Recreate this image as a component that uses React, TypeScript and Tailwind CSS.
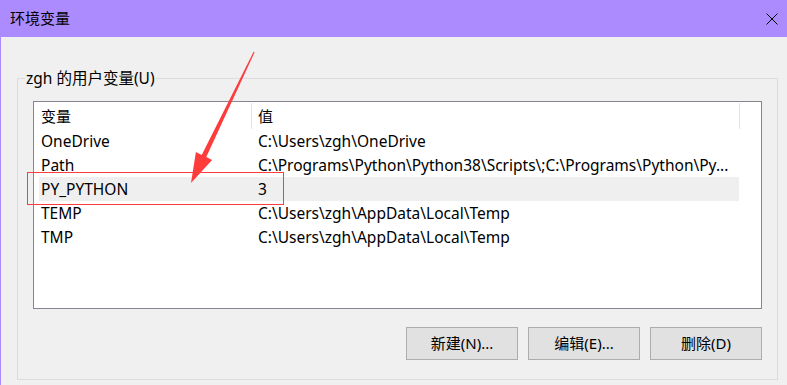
const rows = [
  { name: 'OneDrive', value: 'C:\\Users\\zgh\\OneDrive' },
  { name: 'Path', value: 'C:\\Programs\\Python\\Python38\\Scripts\\;C:\\Programs\\Python\\Py...' },
  { name: 'PY_PYTHON', value: '3', selected: true },
  { name: 'TEMP', value: 'C:\\Users\\zgh\\AppData\\Local\\Temp' },
  { name: 'TMP', value: 'C:\\Users\\zgh\\AppData\\Local\\Temp' },
]

const buttons = ['新建(N)...', '编辑(E)...', '删除(D)']

export default function App() {
  return (
    <div
      className="relative w-[787px] h-[385px] overflow-hidden bg-[#f0f0f0] text-black flex flex-col"
      style={{ fontFamily: '"Noto Sans", "Noto Sans CJK SC", sans-serif' }}
    >
      {/* Title bar */}
      <div className="h-[37px] bg-[#ac8bff] flex items-center justify-between pl-[10px] pr-[9px] shrink-0">
        <span className="text-[15px]">环境变量</span>
        <svg width="12" height="12" viewBox="0 0 12 12" className="mt-px">
          <path d="M0.5 0.5 L11.5 11.5 M11.5 0.5 L0.5 11.5" stroke="#000" strokeWidth="1" />
        </svg>
      </div>

      <div className="flex-1 border-l border-[#ac8bff] pl-[16px] pt-[41px]">
        {/* Group box */}
        <div className="relative w-[761px] h-[302px] border border-[#dcdcdc] pl-[15px] pt-[22px]">
          <span className="absolute left-[7px] -top-[12px] bg-[#f0f0f0] px-px text-[15.5px] leading-[22px]">
            zgh 的用户变量(U)
          </span>

          {/* List */}
          <div className="w-[729px] h-[208px] border border-[#828790] bg-white">
            <div className="flex h-[27px] text-[15px]">
              <div className="w-[218px] border-r border-[#e5e5e5] pl-[7px] mt-px leading-[27px]">变量</div>
              <div className="w-[488px] border-r border-[#e5e5e5] pl-[6px] mt-px leading-[27px]">值</div>
            </div>
            <div className="ml-[5px] w-[700px]">
              {rows.map((row) => (
                <div
                  key={row.name}
                  className={`flex h-[24px] items-center pt-[2px] text-[15.5px] whitespace-nowrap ${
                    row.selected ? 'bg-[#efefef]' : ''
                  }`}
                >
                  <div className="w-[217px] pl-[2px]">{row.name}</div>
                  <div className="flex-1 pl-[2px] overflow-hidden">{row.value}</div>
                </div>
              ))}
            </div>
          </div>

          {/* Buttons */}
          <div className="flex justify-end gap-[10px] mt-[18px] w-[729px]">
            {buttons.map((b) => (
              <button
                key={b}
                className="w-[112px] h-[33px] bg-[#e1e1e1] border border-[#adadad] text-[15px]"
              >
                {b}
              </button>
            ))}
          </div>
        </div>
      </div>

      {/* Annotation: red box and arrow */}
      <div className="absolute left-[27px] top-[172px] w-[257px] h-[33px] border border-[#ff3c3c] pointer-events-none" />
      <svg className="absolute inset-0 pointer-events-none" width="787" height="385">
        <polygon
          points="254.6,52.3 206.3,157.1 212.1,159.9 191,183 195.9,152.1 201.7,154.9 253.6,51.8"
          fill="#ff3c3c"
        />
      </svg>
    </div>
  )
}
